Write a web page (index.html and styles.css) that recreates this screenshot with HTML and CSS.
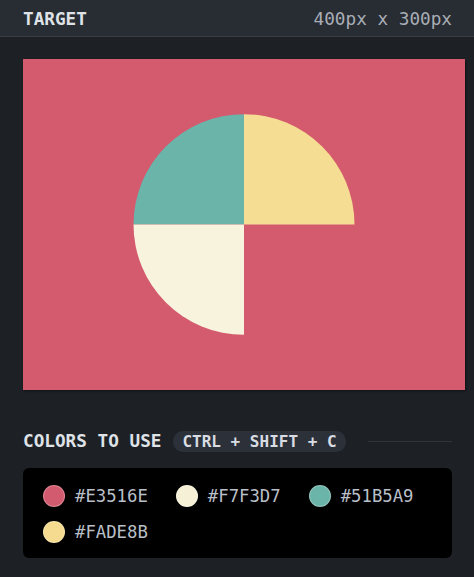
FILE: index.html
```html
<!DOCTYPE html>
<html>
<head>
<meta charset="utf-8">
<link rel="stylesheet" href="styles.css">
</head>
<body>
<header class="bar">
  <span class="bar-title">TARGET</span>
  <span class="bar-size">400px x 300px</span>
</header>
<main class="content">
  <div class="canvas">
    <svg viewBox="0 0 400 300" width="442" height="331" preserveAspectRatio="none">
      <rect width="400" height="300" fill="#d45a6e"/>
      <path d="M200 150 L100 150 A100 100 0 0 1 200 50 Z" fill="#6ab4aa"/>
      <path d="M200 150 L200 50 A100 100 0 0 1 300 150 Z" fill="#f5dd93"/>
      <path d="M200 150 L200 250 A100 100 0 0 1 100 150 Z" fill="#f8f3dc"/>
    </svg>
  </div>
  <div class="colors-head">
    <span class="colors-title">COLORS TO USE</span>
    <span class="kbd">CTRL + SHIFT + C</span>
    <span class="rule"></span>
  </div>
  <div class="palette">
    <div class="swatch"><span class="dot dot-pink"></span><span class="hex">#E3516E</span></div>
    <div class="swatch"><span class="dot dot-cream"></span><span class="hex">#F7F3D7</span></div>
    <div class="swatch"><span class="dot dot-teal"></span><span class="hex">#51B5A9</span></div>
    <div class="swatch"><span class="dot dot-yellow"></span><span class="hex">#FADE8B</span></div>
  </div>
</main>
</body>
</html>
```

FILE: styles.css
```css
html, body {
  margin: 0;
  padding: 0;
}
body {
  background: #1d2126;
  font-family: "DejaVu Sans Mono", "Liberation Mono", monospace;
  width: 474px;
  height: 577px;
  overflow: hidden;
}
.bar {
  height: 37px;
  display: flex;
  align-items: center;
  justify-content: space-between;
  padding: 2px 22px 0 23px;
  box-sizing: border-box;
  background: #282c33;
  border-bottom: 1px solid #393e46;
}
.bar-title {
  font-weight: bold;
  font-size: 17.7px;
  color: #dfe2e7;
}
.bar-size {
  font-size: 17.7px;
  color: #a9aeb6;
}
.content {
  padding: 22px 22px 0 23px;
}
.canvas {
  width: 442px;
  height: 331px;
  box-shadow: 1px 1px 2px rgba(0,0,0,0.5);
}
.canvas svg {
  display: block;
}
.colors-head {
  margin-top: 41px;
  height: 20px;
  display: flex;
  align-items: center;
}
.colors-title {
  font-weight: bold;
  font-size: 17.7px;
  color: #dfe2e7;
  margin-right: 12px;
}
.kbd {
  font-weight: bold;
  font-size: 16px;
  color: #d9dde3;
  background: #2c3139;
  border-radius: 10px;
  height: 21px;
  line-height: 21px;
  padding: 0 9px;
}
.rule {
  flex: 1;
  height: 1px;
  background: #30353d;
  margin-left: 22px;
}
.palette {
  margin-top: 17px;
  background: #000;
  border-radius: 6px;
  padding: 17px 20px 15px 20px;
  display: flex;
  flex-wrap: wrap;
  column-gap: 28px;
  row-gap: 14px;
}
.swatch {
  display: flex;
  align-items: center;
  gap: 10px;
  height: 22px;
}
.dot {
  width: 22px;
  height: 22px;
  border-radius: 50%;
  box-sizing: border-box;
  border: 1px solid rgba(255,255,255,0.25);
}
.dot-pink { background: #d35b6f; }
.dot-cream { background: #f5f0d6; }
.dot-teal { background: #6bb4a9; }
.dot-yellow { background: #f5db8f; }
.hex {
  font-size: 17.3px;
  color: #b9bfc8;
}
```
